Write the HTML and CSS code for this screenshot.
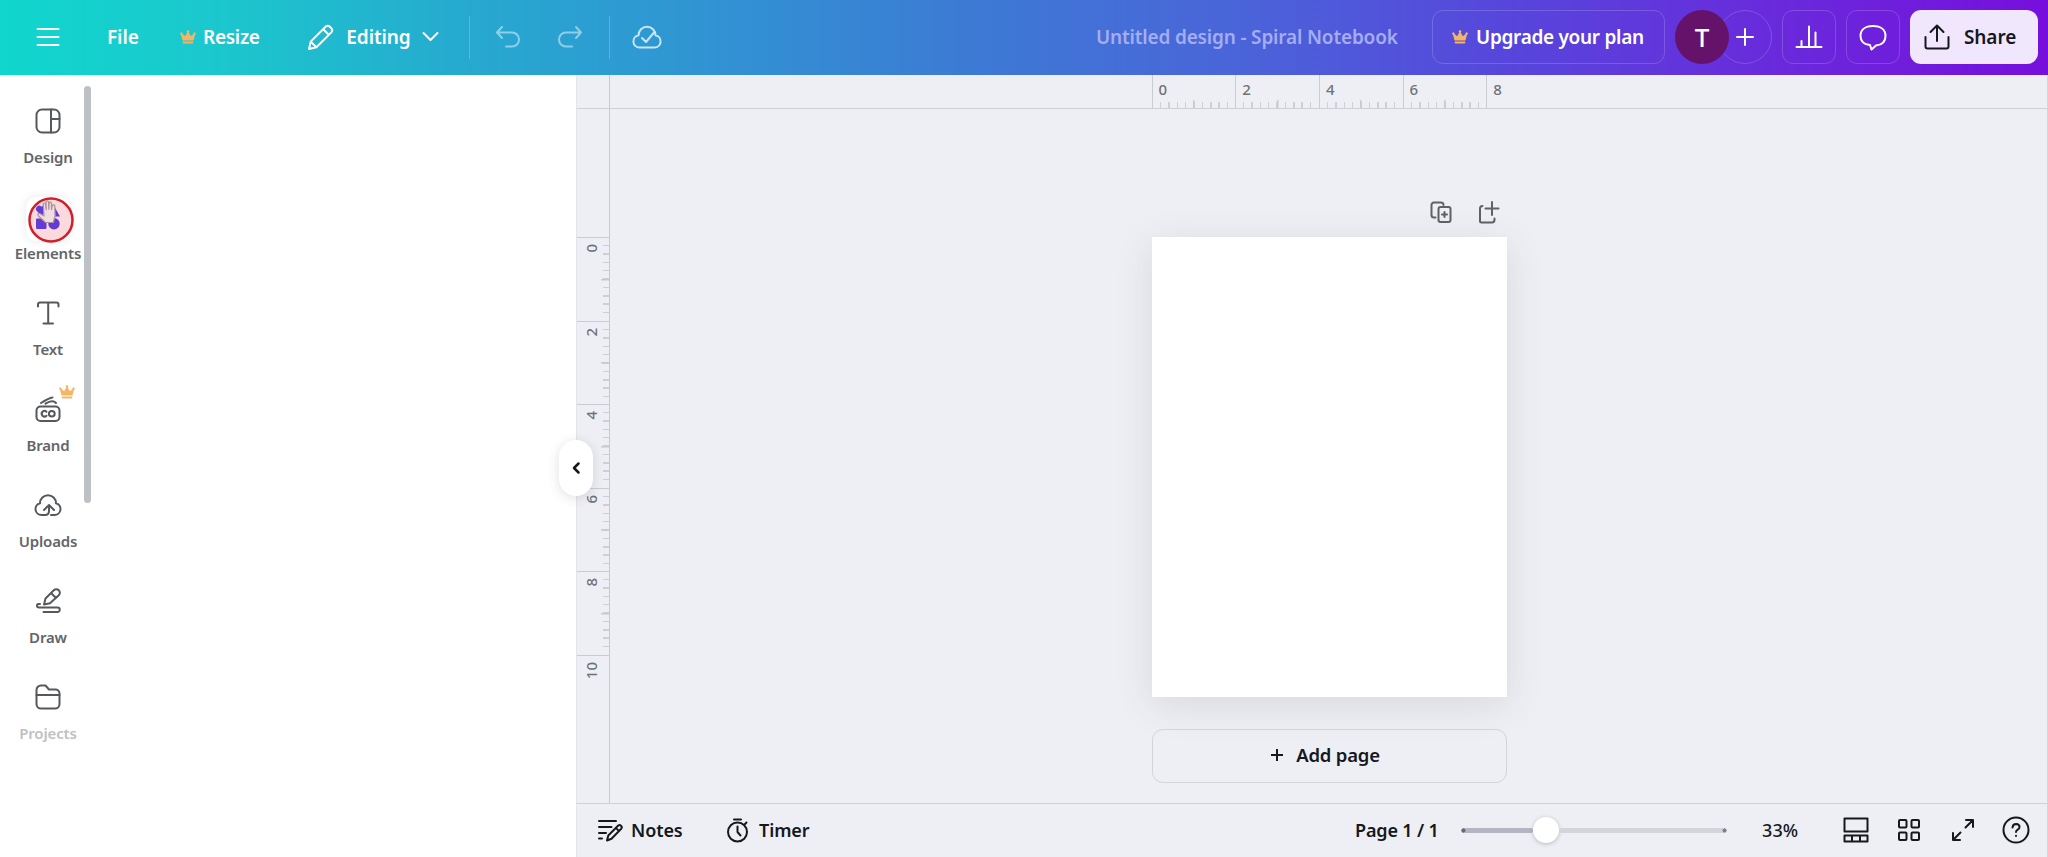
FILE: index.html
```html
<!DOCTYPE html>
<html lang="en">
<head>
<meta charset="utf-8">
<title>Untitled design - Spiral Notebook</title>
<link rel="stylesheet" href="styles.css">
</head>
<body>
<svg class="defs" width="0" height="0">
  <symbol id="crown" viewBox="0 0 16 14"><path fill="#f6b565" d="M2.6 10.4 1 4.7A1.2 1.2 0 1 1 2.5 4l2.6 2.3L7.3 2.6a1.3 1.3 0 1 1 1.4 0l2.2 3.7L13.500 4A1.200 1.200 0 1 1 15 4.700l-1.600 5.700zM2.700 11.600h10.600v1a1 1 0 0 1-1 1H3.700a1 1 0 0 1-1-1z"/></symbol>
</svg>
<div class="app">
  <header class="topbar">
    <button class="menu"><svg width="24" height="24" viewBox="0 0 24 24"><path d="M1.500 4h21M1.500 12h21M1.500 20h21"/></svg></button>
    <button class="file">File</button>
    <button class="resize"><svg class="crown" width="16" height="14"><use href="#crown"/></svg><span>Resize</span></button>
    <button class="editing">
      <svg width="27" height="27" viewBox="0 0 27 27"><path d="m2 25 1.700-7.400L18.600 2.700q2.100-1.900 4.300.1l1.300 1.300q2 2.200.1 4.300L9.400 23.300zM16.200 5.200l5.600 5.600M3.700 17.600l5.700 5.700"/></svg>
      <span>Editing</span>
      <svg class="chev" width="17" height="12" viewBox="0 0 17 12"><path d="m1.500 2 7 7 7-7"/></svg>
    </button>
    <i class="sep"></i>
    <button class="undo"><svg width="26" height="24" viewBox="0 0 26 24"><path d="M7 2 2 7.500 7 13M2 7.500h15a7 7 0 0 1 0 14h-6"/></svg></button>
    <button class="redo"><svg width="26" height="24" viewBox="0 0 26 24"><path d="m19 2 5 5.500-5 5.500M24 7.500H9a7 7 0 0 0 0 14h6"/></svg></button>
    <i class="sep"></i>
    <button class="saved"><svg width="30" height="26" viewBox="0 0 30 26"><path d="M7.500 23.500a6.200 6.200 0 0 1-1-12.300 8.500 8.500 0 0 1 17 0 6.200 6.200 0 0 1-1 12.300zM10 14l4 4 8-9.500"/></svg></button>
    <span class="title">Untitled design - Spiral Notebook</span>
    <button class="outlined upgrade"><svg class="crown" width="16" height="14"><use href="#crown"/></svg><span>Upgrade your plan</span></button>
    <div class="people"><span class="avatar">T</span><button class="invite"><svg width="18" height="18" viewBox="0 0 18 18"><path d="M9 1v16M1 9h16"/></svg></button></div>
    <button class="outlined square stats"><svg width="28" height="26" viewBox="0 0 28 26"><path d="M1.500 23h25M6.500 23v-6M14 23V2.500M20.500 23V8.500"/></svg></button>
    <button class="outlined square chat"><svg width="28" height="28" viewBox="0 0 28 28"><path d="M11 22C5 21.500 1.500 18 1.500 13 1.500 7 6 3 14 3s12.500 4 12.500 10-4 9-9.500 9.500l-4.500 4z"/></svg></button>
    <button class="share"><svg width="26" height="28" viewBox="0 0 26 28"><path d="M1.500 14v9.500a2 2 0 0 0 2 2h19a2 2 0 0 0 2-2V14M13 18V3M6.500 9 13 2.500 19.500 9"/></svg><span>Share</span></button>
  </header>

  <aside class="side">
    <nav class="rail">
      <a class="item"><svg width="28" height="28" viewBox="0 0 28 28"><rect x="2.500" y="2.500" width="23" height="23" rx="5.500"/><path d="M17 2.500v23M17 12h8.500"/></svg><span>Design</span></a>
      <a class="item"><i class="tile"></i><span>Elements</span>
        <svg class="click" width="46" height="46" viewBox="0 0 46 46"><circle class="ring" cx="23" cy="23" r="21.500"/>
          <g class="shapes" transform="translate(5.500 6)"><path d="M8 13 3.500 8.300a3.200 3.200 0 0 1 4.500-4.600 3.200 3.200 0 0 1 4.500 4.600zM20 2l6.500 11.500H14z"/><rect x="2.500" y="15.500" width="10.500" height="10.500" rx="1"/><circle cx="20.500" cy="20.700" r="5.700"/></g>
          <path class="hand" d="M17.500 25.500 10.300 18.700q-1.300-2.600 1.500-2.200l4.200 2.500-.8-12q.5-1.800 2.200-.3l.8 6-.2-8q1.600-1.600 2.500 0l.3 7.500.4-6.500q1.800-1.300 2.300.4v6.600l.8-4.500q1.900-1 2.500.6l.3 10-1.800 6.700z"/></svg></a>
      <a class="item"><svg width="28" height="28" viewBox="0 0 28 28"><path d="M4 7.500V5.500q0-2 2-2h16.500q2 0 2 2v2M14.200 3.500v21M9.500 24.500h9.500"/></svg><span>Text</span></a>
      <a class="item brand"><svg width="28" height="28" viewBox="0 0 28 28"><rect x="2.500" y="11.500" width="23" height="14.500" rx="4"/><path d="M7 8q8-5 11.500-5.500M11.500 8.700q7-4.500 10.500-.7"/><path d="M12.500 16.700a2.800 2.800 0 1 0 0 4"/><ellipse cx="17.800" cy="18.700" rx="2.900" ry="2.800"/></svg><span>Brand</span><svg class="crown badge" width="16" height="14"><use href="#crown"/></svg></a>
      <a class="item"><svg width="28" height="28" viewBox="0 0 28 28"><path d="M11 24H7.500A6 6 0 0 1 6 12.200a8 8 0 0 1 16 0A6 6 0 0 1 20.500 24H17M11 24q4 0 4-4v-5M10 19l5-5 5 5"/></svg><span>Uploads</span></a>
      <a class="item"><svg width="28" height="28" viewBox="0 0 28 28"><path d="m10 17.500 1.500-6 8.300-8.200a3.400 3.400 0 0 1 5 5L16 16.200zM17 6l5 5M6 17H4.500A1.500 1.500 0 0 0 3 18.500Q3 20.500 5 20.500h18.500a2 2 0 0 1 0 4.500H9.500"/></svg><span>Draw</span></a>
      <a class="item faded"><svg width="28" height="28" viewBox="0 0 28 28"><path d="M2.500 11.500V7A4.500 4.500 0 0 1 7 2.500h4.500l3.500 4h6.500a4 4 0 0 1 4 4V21a4.500 4.500 0 0 1-4.500 4.500H7A4.500 4.500 0 0 1 2.500 21z"/><path d="M2.500 12h23"/></svg><span>Projects</span></a>
    </nav>
    <i class="scroll"></i>
    <button class="collapse"><svg width="10" height="14" viewBox="0 0 10 14"><path d="M7.500 2.500 3 7l4.500 4.500"/></svg></button>
  </aside>

  <main class="stage">
    <div class="corner"></div>
    <div class="ruler-x">
      <div class="marks"><span>0</span><span>2</span><span>4</span><span>6</span><span>8</span></div>
    </div>
    <div class="ruler-y">
      <div class="marks"><span><b>0</b></span><span><b>2</b></span><span><b>4</b></span><span><b>6</b></span><span><b>8</b></span><span><b>10</b></span></div>
    </div>
    <section class="canvas">
      <div class="tools">
        <svg width="22" height="22" viewBox="0 0 22 22"><path d="M5.500 16.500H4a2.500 2.500 0 0 1-2.500-2.500V4A2.500 2.500 0 0 1 4 1.500h7A2.500 2.500 0 0 1 13.500 4"/><rect x="8.500" y="6" width="12" height="15" rx="2"/><path d="M14.500 11v5M12 13.500h5"/></svg>
        <svg width="22" height="23" viewBox="0 0 22 23"><path d="M4.500 5Q2 5 2 7.500V20q0 1.500 1.500 1.500H14q2.500 0 2.500-3v-1M14 1v13M7.500 7.500h13"/></svg>
      </div>
      <div class="page"></div>
      <button class="add"><svg width="12" height="12" viewBox="0 0 12 12"><path d="M6 .5v11M.5 6h11"/></svg><span>Add page</span></button>
    </section>
  </main>

  <footer class="bottom">
    <button class="notes"><svg width="26" height="24" viewBox="0 0 26 24"><path d="M1 3h17M1 9h12.500M1 15h7M1 20.500h3M9 22.500l1.300-5L20 7.700q1.500-1.300 3 0t.2 3L13.500 20.800zM17.800 9.900l3.200 3.200"/></svg><span>Notes</span></button>
    <button class="timer"><svg width="24" height="26" viewBox="0 0 24 26"><circle cx="11.500" cy="15" r="9.500"/><path d="M8 2.500h7M19 7l1.500-1.500M11.500 9.500V15l3 3.500"/></svg><span>Timer</span></button>
    <span class="count">Page 1 / 1</span>
    <div class="slider"><i class="fill"></i><i class="thumb"></i><i class="rest"></i></div>
    <span class="zoom">33%</span>
    <svg class="view" width="26" height="26" viewBox="0 0 26 26"><path d="M1.500 1.500h23v13h-23zM1.500 18.500h23v6h-23zM9 18.500v6M17 18.500v6"/></svg>
    <svg class="grid" width="24" height="24" viewBox="0 0 24 24"><rect x="2" y="2" width="7.500" height="7.500" rx="1"/><rect x="14.500" y="2" width="7.500" height="7.500" rx="1"/><rect x="2" y="14.500" width="7.500" height="7.500" rx="1"/><rect x="14.500" y="14.500" width="7.500" height="7.500" rx="1"/></svg>
    <svg class="full" width="24" height="24" viewBox="0 0 24 24"><path d="M15 2h7v7M22 2l-7.500 7.500M9 22H2v-7M2 22l7.500-7.500"/></svg>
    <svg class="help" width="28" height="28" viewBox="0 0 28 28"><circle cx="14" cy="14" r="12.500"/><path d="M10.500 11.500q.3-3.500 3.700-3.500 3.300.2 3.300 3 0 1.800-1.800 2.700-1.700.9-1.700 2.300M14 19.700v.3"/></svg>
  </footer>
</div>
</body>
</html>
```
FILE: styles.css
```css
* { box-sizing: border-box; }
html { overflow: hidden; }
body { margin: 0; font-family: "Noto Sans", "Liberation Sans", sans-serif; color: #15181c; }
.defs { display: block; position: absolute; }
svg { display: block; flex: none; fill: none; stroke: currentColor; stroke-width: 2; stroke-linecap: round; stroke-linejoin: round; }
.crown { stroke: none; }
button { border: 0; background: none; padding: 0; margin: 0; font: inherit; color: inherit; letter-spacing: inherit; display: flex; align-items: center; flex: none; white-space: nowrap; }
.app { width: 2048px; height: 857px; display: grid; grid-template: 75px 728px 54px / 576px 1fr; overflow: hidden; background: #fff; }

.topbar { grid-column: 1 / 3; display: flex; align-items: center; color: #fff; font-size: 19px; font-weight: 600; letter-spacing: -.1px; line-height: 26px; padding: 0 10px 1px 36px; background: linear-gradient(90deg, #10d6cd 0, #1bc8cd 210px, #25accf 440px, #3095d3 690px, #3c7bd4 960px, #4a65d9 1230px, #5549db 1480px, #682cdb 1760px, #770fdc 2048px); }
.menu { width: 71px; }
.file { width: 73px; }
.resize { width: 127px; gap: 7px; letter-spacing: -.3px; }
.editing { width: 162px; }
.editing span { width: 77px; margin-left: 11px; letter-spacing: -.1px; }
.editing svg:first-child { margin-right: -5px; }
.chev { margin-left: 5px; }
.sep { width: 1px; height: 43px; background: rgba(255,255,255,.22); }
.undo { width: 62px; margin-left: 25px; color: rgba(255,255,255,.48); }
.redo { width: 52px; color: rgba(255,255,255,.48); }
.saved { margin-left: 22px; color: rgba(255,255,255,.75); }
.title { width: 336px; margin-left: auto; color: #a5adf1; font-weight: 600; letter-spacing: -.17px; white-space: nowrap; }
.outlined { border: 1.500px solid rgba(255,255,255,.17); border-radius: 11px; height: 54px; }
.upgrade { width: 233px; padding-left: 19px; gap: 8px; letter-spacing: -.3px; }
.people { display: flex; width: 97px; margin: 0 10px; }
.avatar { width: 54px; height: 54px; border-radius: 50%; background: #65126a; display: grid; place-items: center; font-size: 26px; font-weight: 500; z-index: 1; }
.invite { width: 54px; height: 54px; margin-left: -11px; border-radius: 50%; border: 1.500px solid rgba(255,255,255,.17); justify-content: center; }
.square { width: 54px; justify-content: center; }
.chat { margin: 0 10px; }
.share { width: 128px; height: 54px; border-radius: 11px; background: #f1e7fc; color: #15181c; padding-left: 14px; gap: 14px; }

.side { grid-row: 2 / 4; display: flex; position: relative; background: #fff; }
.rail { width: 84px; padding: 32px 0 0 12px; }
.item { width: 72px; height: 96px; display: flex; flex-direction: column; align-items: center; position: relative; color: #55585c; }
.item span { font-size: 15px; font-weight: 600; letter-spacing: -.15px; line-height: 22px; margin-top: 11px; color: #636568; }
.tile { width: 44px; height: 44px; margin: -6px 0 -10px; border-radius: 10px; box-shadow: 0 0 8px rgba(60,70,120,.13); }
.click { position: absolute; left: 16px; top: -6px; stroke: none; }
.ring { fill: #fadadd; stroke: #cf1f2b; stroke-width: 2.500; }
.shapes { fill: #613bd4; }
.hand { fill: #f3dce1; stroke: #a99398; stroke-width: 1.200; }
.badge { position: absolute; left: 47px; top: -10px; }
.faded span { color: #c0c1c3; }
.scroll { width: 7px; height: 417px; margin-top: 11px; border-radius: 4px; background: #bdc0c4; }
.collapse { position: absolute; left: 559px; top: 365px; width: 34px; height: 56px; border-radius: 17px; background: #fff; box-shadow: 0 2px 12px rgba(50,60,90,.16); justify-content: center; z-index: 2; }
.collapse svg { stroke-width: 2.500; }

.stage { display: grid; grid-template: 34px 1fr / 33px 1fr; background: #eeeff4; border-right: 1px solid #d3d4dd; border-left: 1px solid #e4e5ea; }
.corner, .ruler-x { border-bottom: 1px solid #cfd0d4; }
.corner, .ruler-y { border-right: 1px solid #c8c9cd; }
.ruler-x { padding-left: 541.500px; }
.marks { display: flex; color: #707276; font-size: 15px; font-weight: 500; line-height: 28px; }
.marks span { flex: none; }
.ruler-x span { width: 83.700px; height: 33px; border-left: 1px solid #cbccd1; padding-left: 6px; background:
  linear-gradient(#c9cacf, #c9cacf) 40.500px 100% / 1.500px 8px no-repeat,
  repeating-linear-gradient(90deg, transparent 0 6.900px, #cecfd4 6.900px 8.370px) 0 100% / 76px 6px no-repeat; }
.ruler-x span:last-child { background: none; }
.ruler-y { padding-top: 128px; }
.ruler-y .marks { flex-direction: column; }
.ruler-y span { height: 83.600px; border-top: 1px solid #cbccd1; padding: 6px 0 0; background:
  linear-gradient(#c9cacf, #c9cacf) 100% 40.500px / 8px 1.500px no-repeat,
  repeating-linear-gradient(180deg, transparent 0 6.900px, #cecfd4 6.900px 8.370px) 100% 0 / 6px 76px no-repeat; }
.ruler-y span:last-child { background: none; }
.ruler-y b { display: block; font-weight: 500; writing-mode: vertical-rl; transform: rotate(180deg); line-height: 28px; width: 28px; }
.canvas { display: flex; flex-direction: column; padding: 91px 0 0 542px; }
.tools { display: flex; width: 355px; height: 37px; justify-content: flex-end; gap: 26px; padding: 1px 7px 0 0; color: #5f6165; }
.page { width: 355px; height: 460px; background: #fff; box-shadow: 0 8px 36px rgba(60,65,85,.12); }
.add { width: 355px; height: 54px; margin-top: 32px; padding: 0 8px 3px 0; border: 1.500px solid #d3d4d9; border-radius: 11px; justify-content: center; gap: 13px; font-size: 18.500px; font-weight: 600; letter-spacing: -.2px; }

.bottom { display: flex; align-items: center; background: #eeeff4; border-top: 1px solid #d0d1d6; border-left: 1px solid #e4e5ea; border-right: 1px solid #d3d4dd; padding: 0 17px 1px 21px; font-size: 18px; font-weight: 600; letter-spacing: -.1px; white-space: nowrap; }
.notes { width: 128px; gap: 7px; }
.timer { gap: 9px; }
.count { width: 106px; margin-left: auto; letter-spacing: -.15px; }
.slider { width: 266px; display: flex; align-items: center; }
.slider i { height: 5px; border-radius: 3px; }
.slider .fill { width: 72px; background: radial-gradient(circle at 2.500px 50%, #666971 0 1.800px, transparent 2.300px), #b3b6c2; }
.slider .rest { flex: 1; background: radial-gradient(circle at calc(100% - 2.500px) 50%, #7e8087 0 1.800px, transparent 2.300px), #d3d5db; }
.slider .thumb { width: 26px; height: 26px; border-radius: 50%; background: #fff; box-shadow: 0 1px 4px rgba(50,60,90,.3); }
.zoom { width: 81px; margin-left: 35px; font-weight: 500; letter-spacing: .1px; }
.grid { margin-left: 28px; }
.full { margin: 0 27px 0 30px; }
```
